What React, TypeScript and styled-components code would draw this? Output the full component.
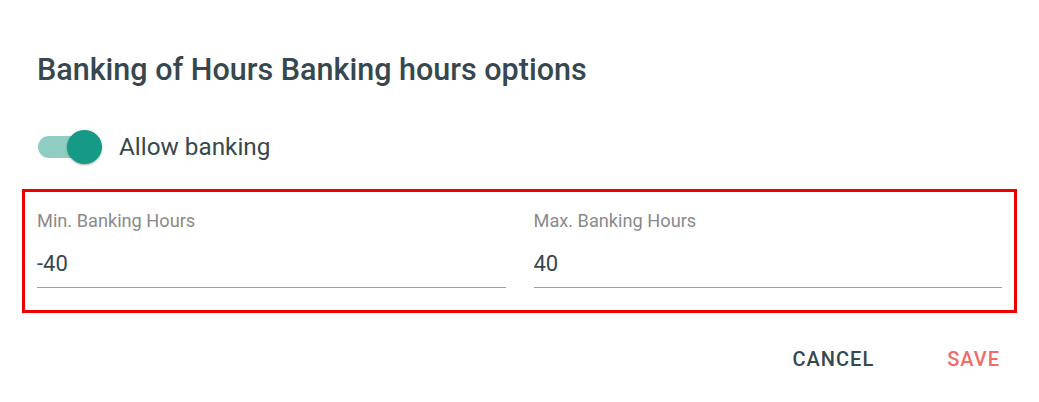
import React from "react";
import styled, { createGlobalStyle } from "styled-components";

const Global = createGlobalStyle`
  html, body { margin: 0; padding: 0; background: #ffffff; }
  body { font-family: Roboto, "Liberation Sans", Arial, sans-serif; }
  * { box-sizing: border-box; }
`;

const Dialog = styled.div`
  width: 1039px;
  height: 402px;
  background: #ffffff;
  display: flex;
  flex-direction: column;
  padding-top: 52px;
`;

const Title = styled.h2`
  margin: 0 0 0 37px;
  font-size: 30.5px;
  line-height: 36px;
  font-weight: 500;
  color: #37474f;
`;

const SwitchRow = styled.label`
  display: flex;
  align-items: center;
  height: 34px;
  margin: 42px 0 0 38px;
  gap: 16px;
  cursor: pointer;
`;

const SwitchBox = styled.span`
  position: relative;
  width: 65px;
  height: 34px;
  display: inline-flex;
  align-items: center;
`;

const Track = styled.span<{ $on: boolean }>`
  width: 60px;
  height: 22px;
  border-radius: 11px;
  background: ${(p) => (p.$on ? "#8fcdc3" : "#c7c7c7")};
`;

const Thumb = styled.span<{ $on: boolean }>`
  position: absolute;
  top: 0;
  left: ${(p) => (p.$on ? "29px" : "0")};
  width: 35px;
  height: 34px;
  border-radius: 50%;
  background: ${(p) => (p.$on ? "#169a86" : "#f5f5f5")};
  box-shadow: 0 1px 3px rgba(0, 0, 0, 0.22), 0 1px 1px rgba(0, 0, 0, 0.12);
`;

const SwitchLabel = styled.span`
  font-size: 24.3px;
  line-height: 28px;
  color: #37474f;
`;

const Highlight = styled.div`
  margin: 25px 0 0 22px;
  width: 995px;
  border: 3px solid #ee0000;
  padding: 18px 12px 22px 12px;
  display: grid;
  grid-template-columns: 1fr 1fr;
  column-gap: 28px;
`;

const Field = styled.div`
  display: flex;
  flex-direction: column;
`;

const FieldLabel = styled.span`
  font-size: 18.2px;
  line-height: 21px;
  color: #8a8a8a;
`;

const FieldInput = styled.input`
  margin-top: 18px;
  border: none;
  border-bottom: 1px solid #9e9e9e;
  outline: none;
  padding: 0 0 10px 0;
  font-family: inherit;
  font-size: 22px;
  line-height: 28px;
  height: 39px;
  color: #37474f;
  background: transparent;
  width: 100%;
`;

const Actions = styled.div`
  display: flex;
  justify-content: flex-end;
  gap: 25px;
  margin-top: 22px;
  padding-right: 15px;
`;

const ActionButton = styled.button<{ $tone: "neutral" | "accent" }>`
  border: none;
  background: transparent;
  padding: 12px 24px;
  font-family: inherit;
  font-size: 20px;
  line-height: 24px;
  font-weight: 500;
  letter-spacing: 1px;
  text-transform: uppercase;
  color: ${(p) => (p.$tone === "accent" ? "#f26b6b" : "#37474f")};
  cursor: pointer;
`;

export default function App() {
  const [on, setOn] = React.useState(true);
  return (
    <>
      <Global />
      <Dialog>
        <Title>Banking of Hours Banking hours options</Title>
        <SwitchRow onClick={() => setOn(!on)}>
          <SwitchBox>
            <Track $on={on} />
            <Thumb $on={on} />
          </SwitchBox>
          <SwitchLabel>Allow banking</SwitchLabel>
        </SwitchRow>
        <Highlight>
          <Field>
            <FieldLabel>Min. Banking Hours</FieldLabel>
            <FieldInput defaultValue="-40" />
          </Field>
          <Field>
            <FieldLabel>Max. Banking Hours</FieldLabel>
            <FieldInput defaultValue="40" />
          </Field>
        </Highlight>
        <Actions>
          <ActionButton $tone="neutral">Cancel</ActionButton>
          <ActionButton $tone="accent">Save</ActionButton>
        </Actions>
      </Dialog>
    </>
  );
}
